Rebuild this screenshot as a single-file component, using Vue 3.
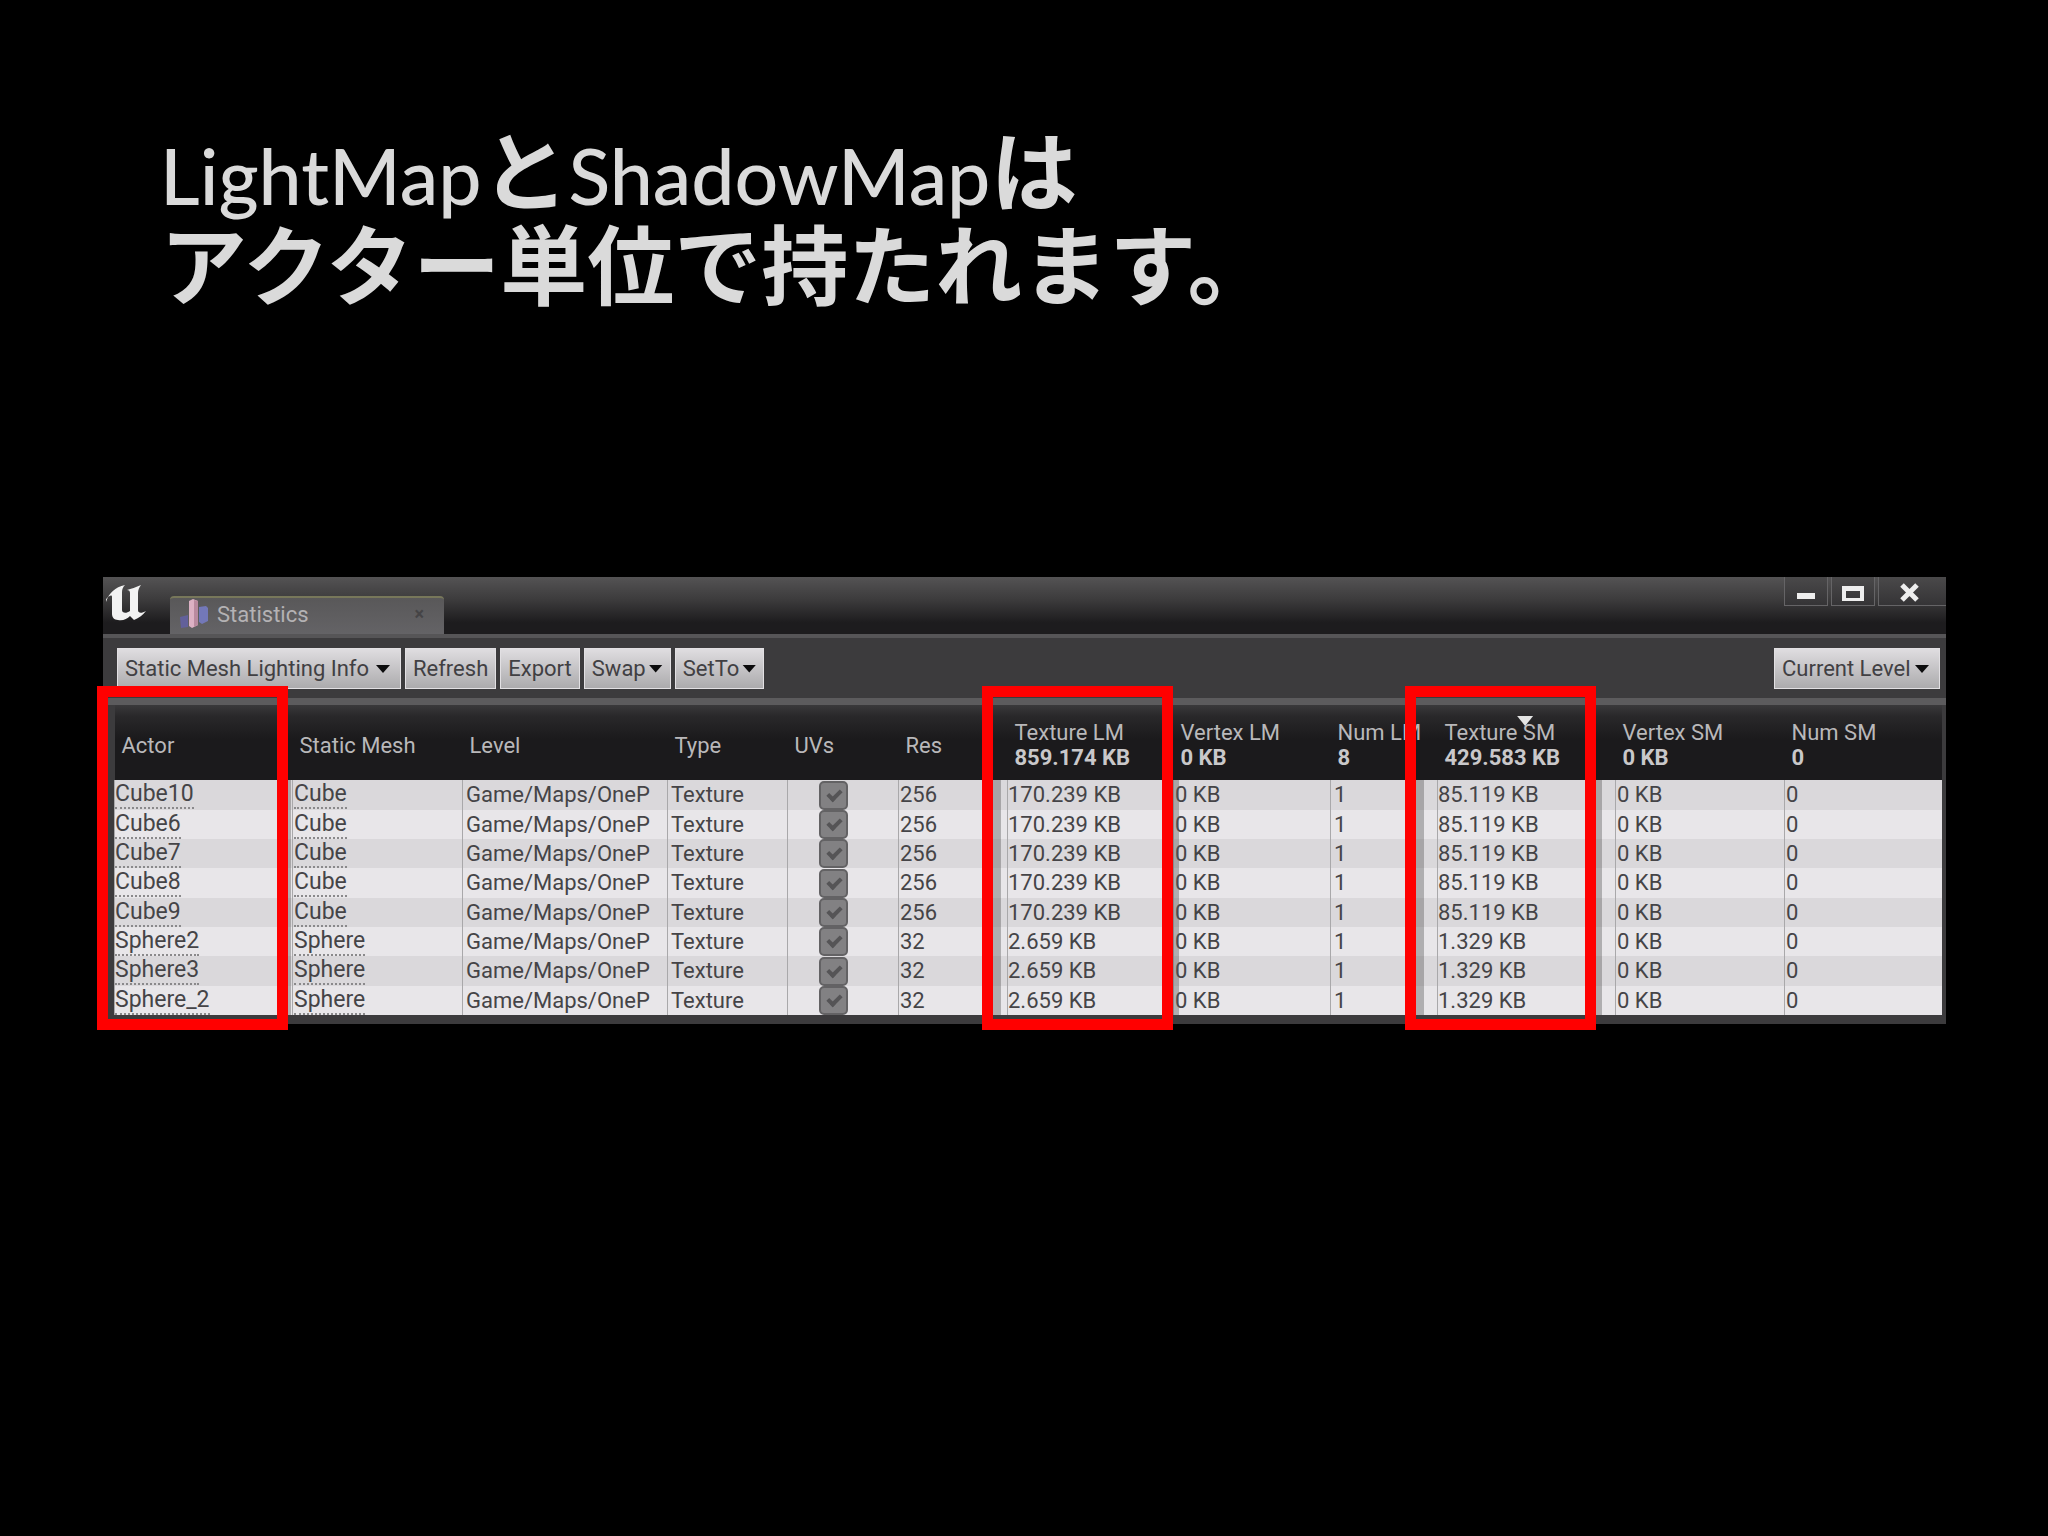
<script setup>
const columns = [
  { key: 'actor', label: 'Actor', width: 178 },
  { key: 'mesh', label: 'Static Mesh', width: 170 },
  { key: 'level', label: 'Level', width: 205 },
  { key: 'type', label: 'Type', width: 120 },
  { key: 'uvs', label: 'UVs', width: 111 },
  { key: 'res', label: 'Res', width: 109 },
  { key: 'textureLm', label: 'Texture LM', total: '859.174 KB', width: 166 },
  { key: 'vertexLm', label: 'Vertex LM', total: '0 KB', width: 157 },
  { key: 'numLm', label: 'Num LM', total: '8', width: 107 },
  { key: 'textureSm', label: 'Texture SM', total: '429.583 KB', width: 178, sorted: true },
  { key: 'vertexSm', label: 'Vertex SM', total: '0 KB', width: 169 },
  { key: 'numSm', label: 'Num SM', total: '0' },
]

const makeRow = (actor, mesh, res, textureLm, textureSm) => ({
  actor,
  mesh,
  level: 'Game/Maps/OneP',
  type: 'Texture',
  uvs: true,
  res,
  textureLm,
  vertexLm: '0 KB',
  numLm: '1',
  textureSm,
  vertexSm: '0 KB',
  numSm: '0',
})

const rows = [
  ...['Cube10', 'Cube6', 'Cube7', 'Cube8', 'Cube9'].map((n) =>
    makeRow(n, 'Cube', '256', '170.239 KB', '85.119 KB')
  ),
  ...['Sphere2', 'Sphere3', 'Sphere_2'].map((n) =>
    makeRow(n, 'Sphere', '32', '2.659 KB', '1.329 KB')
  ),
]
</script>

<template>
  <main class="slide" lang="ja">
    <h1 class="title">
      <span class="latin">LightMap</span>と<span class="latin">ShadowMap</span>は<br />アクター単位で持たれます。
    </h1>

    <section class="window" lang="en">
      <header class="titlebar">
        <svg class="logo" viewBox="0 0 42 36" aria-hidden="true">
          <path d="M0 17C3 8 9 2 19 0c-2 2-3 4-3 7v18c0 3 4 4 8 1V8c0-2-1-3-3-3 4-1 9-3 14-5-2 3-3 5-3 8v17c0 3 3 4 8 1-3 4-7 7-12 9l-4-4c-3 3-7 5-12 4-4 0-6-3-6-6V12c0-3-4-1-8 5z" fill="#f2f2f2" />
        </svg>
        <div class="tab">
          <svg class="chart" viewBox="0 0 30 30" aria-hidden="true">
            <path d="M1 18l8-2v12l-7 1z" fill="#62609a" />
            <path d="M10 2l4-2 5 2v24l-6 3-3-2z" fill="#dcb1c4" />
            <path d="M15 1l4 1v24l-4 2z" fill="#b98a9f" />
            <path d="M20 8l7-1 2 2v13l-6 3-3-2z" fill="#7378b8" />
          </svg>
          <span class="tab-name">Statistics</span>
          <button class="tab-close" aria-label="Close tab">×</button>
        </div>
        <div class="controls">
          <button class="minimize" aria-label="Minimize">
            <svg viewBox="0 0 24 20" width="24" height="20"><path d="M3 10h18v6H3z" fill="#eee" /></svg>
          </button>
          <button class="maximize" aria-label="Maximize">
            <svg viewBox="0 0 24 20" width="24" height="20"><path d="M1 3h22v15H1zM5 8v7h14V8z" fill="#eee" fill-rule="evenodd" /></svg>
          </button>
          <button class="close" aria-label="Close">
            <svg viewBox="0 0 24 20" width="24" height="20"><path d="M4 2l15 15M19 2L4 17" stroke="#eee" stroke-width="5" /></svg>
          </button>
        </div>
      </header>

      <div class="toolbar">
        <label class="picker">
          <select class="tool info" aria-label="Statistics type"><option>Static Mesh Lighting Info</option></select>
          <i class="caret"></i>
        </label>
        <button class="tool">Refresh</button>
        <button class="tool">Export</button>
        <button class="tool">Swap<i class="caret"></i></button>
        <button class="tool">SetTo<i class="caret"></i></button>
        <label class="picker last">
          <select class="tool scope" aria-label="Scope"><option>Current Level</option></select>
          <i class="caret"></i>
        </label>
      </div>

      <div class="grid">
        <table>
          <colgroup>
            <col v-for="c in columns" :key="c.key" :style="c.width ? { width: c.width + 'px' } : null" />
          </colgroup>
          <thead>
            <tr>
              <th v-for="c in columns" :key="c.key" scope="col">
                <span class="label">{{ c.label }}<i v-if="c.sorted" class="sort"></i></span>
                <strong v-if="c.total">{{ c.total }}</strong>
              </th>
            </tr>
          </thead>
          <tbody>
            <tr v-for="r in rows" :key="r.actor">
              <td v-for="c in columns" :key="c.key" :class="c.key">
                <a v-if="c.key === 'actor' || c.key === 'mesh'" href="#">{{ r[c.key] }}</a>
                <input v-else-if="c.key === 'uvs'" type="checkbox" checked :aria-label="'UVs of ' + r.actor" />
                <template v-else>{{ r[c.key] }}</template>
              </td>
            </tr>
          </tbody>
        </table>
      </div>

      <div class="mark mark-actor"></div>
      <div class="mark mark-lm"></div>
      <div class="mark mark-sm"></div>
    </section>
  </main>
</template>

<style>
body {
  margin: 0;
  background: #000;
}
</style>

<style scoped>
.slide {
  box-sizing: border-box;
  min-height: 100vh;
  padding: 121px 102px 0 103px;
  background: #000;
  font-family: Roboto, "Liberation Sans", sans-serif;
}
.title {
  height: 456px;
  margin: 0 0 0 57px;
  color: #dadada;
  font: 700 87px/92px "Noto Sans CJK JP", sans-serif;
}
.latin {
  font: 500 77px/80px Lato, sans-serif;
}
.window {
  position: relative;
  background: #3c3b3d;
  font-size: 22px;
}
.titlebar {
  display: flex;
  align-items: flex-end;
  height: 57px;
  background: linear-gradient(#545354, #3c3b3c 40%, #1d1c1e 80%);
}
.logo {
  align-self: flex-start;
  width: 42px;
  height: 36px;
  margin: 8px 22px 0 3px;
}
.tab {
  box-sizing: border-box;
  display: flex;
  align-items: center;
  width: 274px;
  height: 38px;
  padding: 0 20px 4px 9px;
  border-top: 2px solid #77775a;
  border-radius: 4px 4px 0 0;
  background: linear-gradient(#595859, #646366);
  color: #b4b2b4;
}
.chart {
  width: 30px;
  height: 30px;
  margin-right: 8px;
}
.tab-close {
  margin-left: auto;
  padding: 0;
  border: 0;
  background: none;
  color: #454446;
  font: 700 18px/20px Roboto, sans-serif;
}
.controls {
  display: flex;
  align-self: flex-start;
  gap: 3px;
  margin-left: auto;
}
.controls button {
  box-sizing: border-box;
  display: flex;
  align-items: center;
  justify-content: center;
  width: 44px;
  height: 29px;
  padding: 3px 0 0;
  border: 1px solid #656466;
  border-top: 0;
  background: linear-gradient(#4a494a, #353436);
}
.controls .close {
  width: 68px;
  padding-right: 6px;
  border-right: 0;
}
.toolbar {
  display: flex;
  align-items: flex-start;
  gap: 4px;
  height: 42px;
  padding: 10px 6px 8px 14px;
  border-top: 4px solid #565557;
}
.tool {
  box-sizing: border-box;
  display: flex;
  align-items: center;
  gap: 3px;
  height: 41px;
  padding: 0 7px;
  border: 1px solid #e2e0e3;
  border-radius: 0;
  appearance: none;
  background: linear-gradient(#dfdde0, #acabad);
  color: #414043;
  font: 400 22px/28px Roboto, sans-serif;
  white-space: nowrap;
}
.picker {
  position: relative;
}
.picker .caret {
  position: absolute;
  top: 17px;
  right: 11px;
}
.info {
  width: 284px;
}
.scope {
  width: 166px;
}
.last {
  margin-left: auto;
}
.caret {
  width: 14px;
  height: 8px;
  background: #0c0c0d;
  clip-path: polygon(0 0, 100% 0, 50% 100%);
}
.grid {
  padding: 0 4px 9px 11px;
  border-top: 7px solid #5c5b5d;
}
table {
  width: 100%;
  border-collapse: collapse;
  table-layout: fixed;
}
thead tr {
  height: 75px;
  background: linear-gradient(#3a393b, #29282a 15%, #1b1a1c 45%);
}
th {
  padding: 5px 0 0 7px;
  color: #b9b8ba;
  font-weight: 400;
  line-height: 25px;
  text-align: left;
  white-space: nowrap;
}
.label {
  position: relative;
  display: inline-block;
}
.sort {
  position: absolute;
  top: -4px;
  right: 22px;
  width: 16px;
  height: 10px;
  background: #e4e4e4;
  clip-path: polygon(0 0, 100% 0, 50% 100%);
}
strong {
  display: block;
  color: #c9c8ca;
}
tbody tr {
  height: 29px;
  background: #e8e6e9;
}
tbody tr:nth-child(3n + 1) {
  height: 30px;
}
tbody tr:nth-child(odd) {
  background: #dad8db;
}
td {
  padding: 0 0 0 1px;
  border-left: 1px solid #a9a8aa;
  color: #454447;
  line-height: 26px;
  overflow: hidden;
  white-space: nowrap;
}
td.actor,
td.textureLm,
td.textureSm {
  padding-left: 0;
}
td.level,
td.type,
td.numLm {
  padding-left: 3px;
}
td a {
  display: block;
  width: fit-content;
  border-bottom: 2px dotted #8a898b;
  color: inherit;
  font-size: 23px;
  text-decoration: none;
}
td input {
  display: block;
  position: relative;
  width: 29px;
  height: 29px;
  margin: 0 0 0 30px;
  appearance: none;
  border: 2px solid #636264;
  border-radius: 5px;
  background: #828183;
}
td input::after {
  content: "";
  position: absolute;
  top: 4px;
  left: 9px;
  width: 5px;
  height: 10px;
  border: solid #555456;
  border-width: 0 4px 4px 0;
  transform: rotate(45deg);
}
.mark {
  position: absolute;
  top: 109px;
  bottom: -6px;
  box-sizing: border-box;
  width: 191px;
  border: 11px solid #f00;
  pointer-events: none;
}
.mark-actor {
  left: -6px;
}
.mark-lm {
  left: 879px;
}
.mark-sm {
  left: 1302px;
}
.mark::before,
.mark::after {
  content: "";
  position: absolute;
  top: 83px;
  bottom: 4px;
  background: rgb(90 90 90 / 40%);
}
.mark::before {
  left: 0;
  width: 8px;
}
.mark::after {
  left: 180px;
  width: 6px;
}
.mark-actor::before {
  display: none;
}
.mark-actor::after {
  width: 3px;
}
</style>
